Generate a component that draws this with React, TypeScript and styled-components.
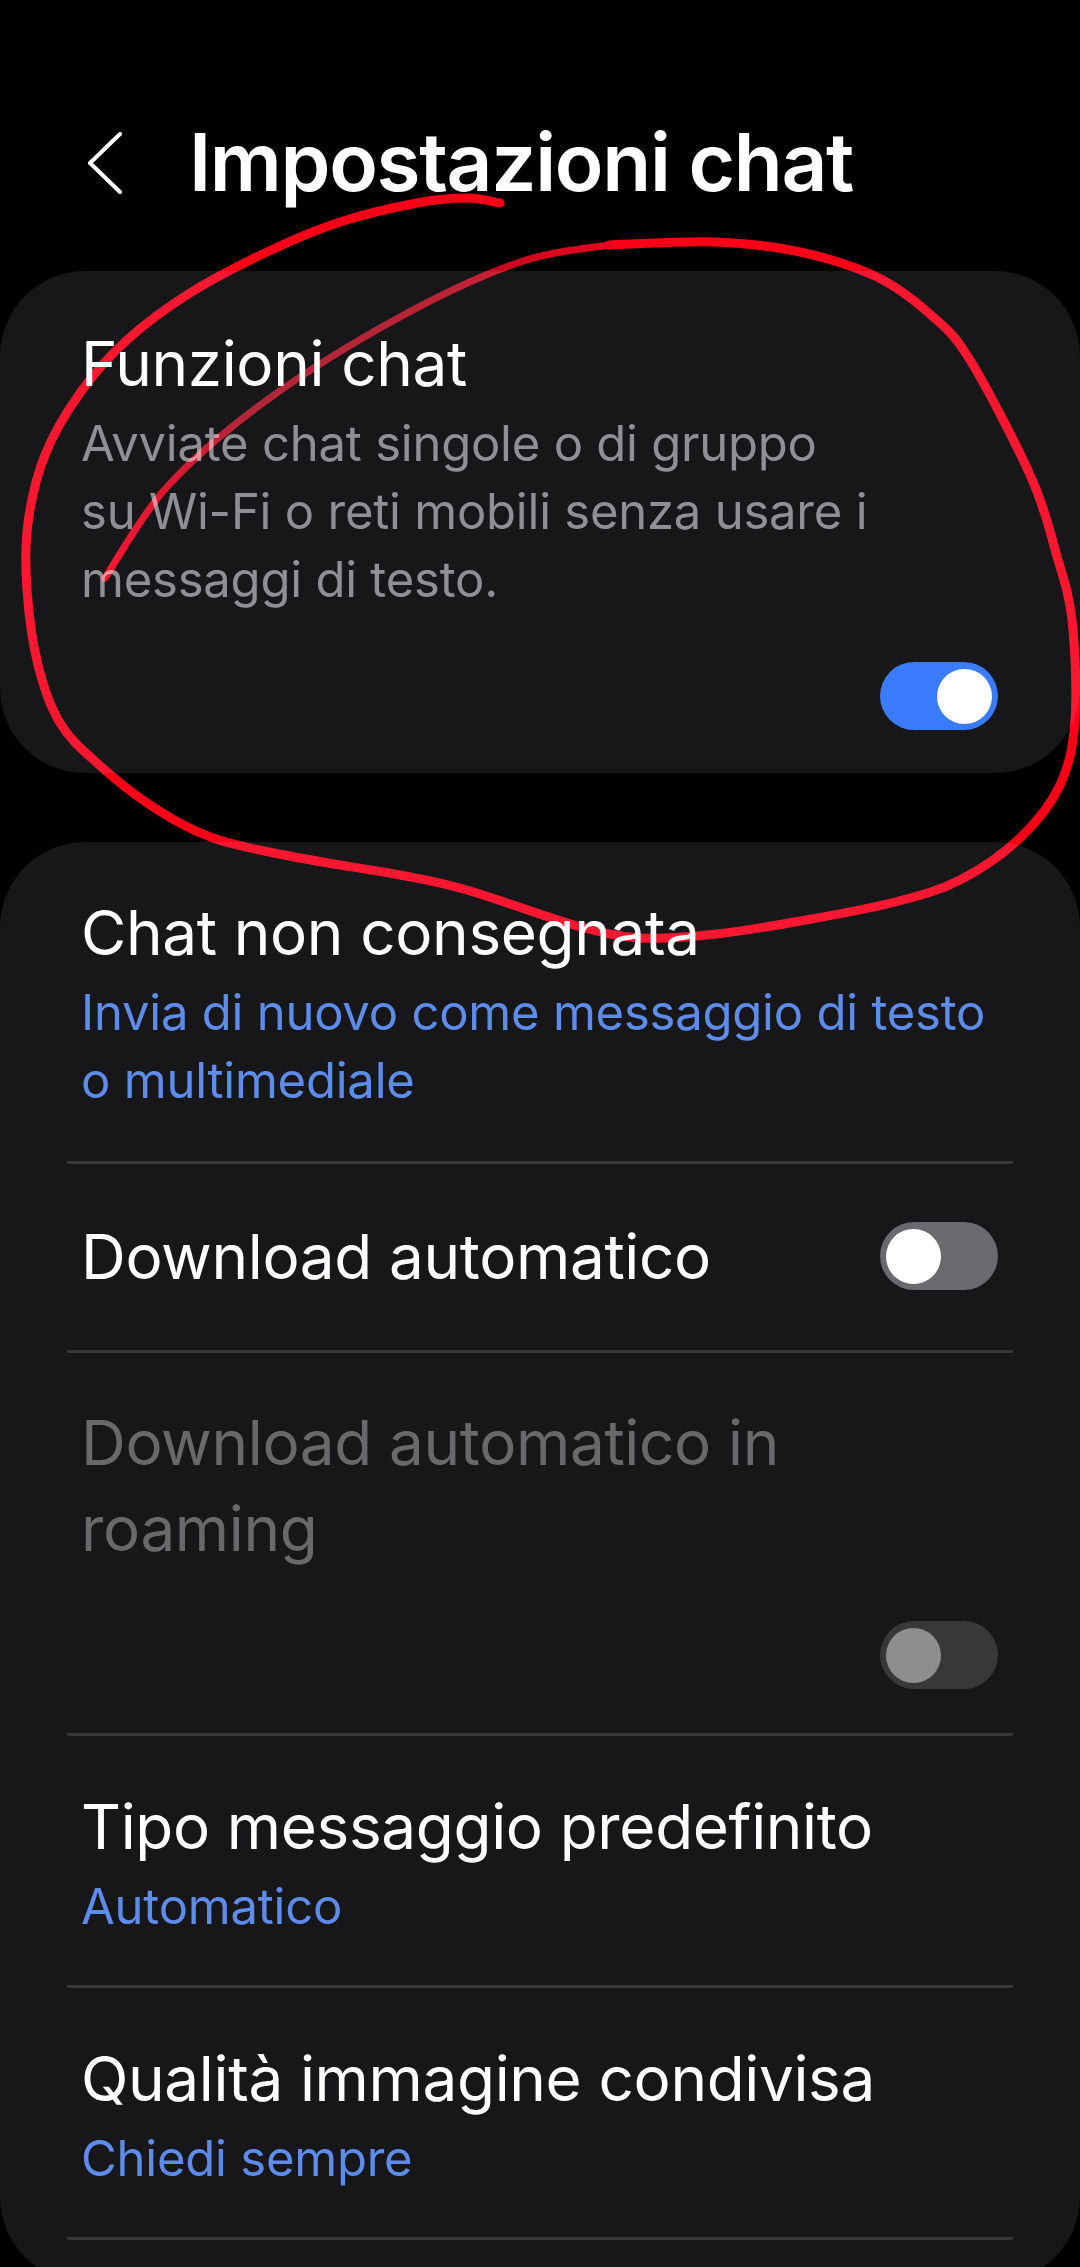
import React from "react";
import styled, { createGlobalStyle } from "styled-components";

const Global = createGlobalStyle`
  html, body { margin: 0; padding: 0; background: #000; }
  #root { width: 1080px; height: 2267px; }
`;

const Page = styled.div`
  position: relative;
  width: 1080px;
  height: 2267px;
  overflow: hidden;
  background: #000;
  font-family: "Inter", "Roboto", "Liberation Sans", sans-serif;
  color: #fff;
  display: flex;
  flex-direction: column;
`;

const Header = styled.header`
  height: 271px;
  flex: none;
  box-sizing: border-box;
  padding: 117px 0 0 87px;
  display: flex;
  align-items: flex-start;
`;

const BackIcon = styled.svg`
  width: 36px;
  height: 62px;
  flex: none;
  margin-top: 15px;
`;

const Title = styled.h1`
  margin: 0 0 0 66px;
  font-size: 80px;
  line-height: 90px;
  font-weight: 600;
  letter-spacing: -1.3px;
  white-space: nowrap;
`;

const Card = styled.section<{ $height: number; $gap?: number }>`
  flex: none;
  box-sizing: border-box;
  height: ${(p) => p.$height}px;
  margin-bottom: ${(p) => p.$gap ?? 0}px;
  padding: 0 67px;
  background: #17171a;
  border-radius: 85px;
`;

const Row = styled.div<{ $height: number; $line?: boolean; $top: number }>`
  box-sizing: border-box;
  height: ${(p) => p.$height}px;
  padding: ${(p) => p.$top}px 15px 0 14px;
  border-bottom: ${(p) => (p.$line ? "3px solid #37373a" : "none")};
`;

const InlineRow = styled(Row)`
  display: flex;
  justify-content: space-between;
  align-items: flex-start;
`;

const Name = styled.div<{ $muted?: boolean }>`
  font-size: 62px;
  line-height: 86px;
  font-weight: 400;
  letter-spacing: -0.35px;
  color: ${(p) => (p.$muted ? "#69696c" : "#fff")};
`;

const Detail = styled.div<{ $link?: boolean }>`
  margin-top: 3px;
  font-size: 49px;
  line-height: 68px;
  letter-spacing: -0.23px;
  color: ${(p) => (p.$link ? "#5d8ceb" : "#8f8f94")};
`;

const SwitchLine = styled.div<{ $top: number }>`
  display: flex;
  justify-content: flex-end;
  margin-top: ${(p) => p.$top}px;
`;

const Track = styled.div<{ $state: "on" | "off" | "disabled"; $shift?: number }>`
  width: 118px;
  height: 68px;
  flex: none;
  box-sizing: border-box;
  border-radius: 34px;
  padding: 6px;
  margin-top: ${(p) => p.$shift ?? 0}px;
  display: flex;
  justify-content: ${(p) => (p.$state === "on" ? "flex-end" : "flex-start")};
  background: ${(p) =>
    p.$state === "on" ? "#3a7bfb" : p.$state === "off" ? "#69696e" : "#38383b"};
`;

const Knob = styled.div<{ $dim?: boolean }>`
  width: 55px;
  height: 55px;
  margin: 0.5px 0;
  border-radius: 50%;
  background: ${(p) => (p.$dim ? "#8e8e90" : "#fff")};
`;

const Ink = styled.svg`
  position: absolute;
  left: 0;
  top: 0;
  width: 1080px;
  height: 2267px;
  pointer-events: none;
  mix-blend-mode: screen;
`;

type Pt = [number, number];

const loop: Pt[] = [
  [500, 203], [467, 198], [417, 203], [340, 222], [267, 252], [190, 293], [127, 340],
  [80, 393], [45, 455], [28, 523], [27, 590], [38, 665], [60, 723], [97, 763],
  [150, 805], [213, 838], [300, 858], [400, 875], [467, 890], [574, 925], [640, 938],
  [716, 934], [806, 920], [895, 902], [960, 880], [1020, 838], [1060, 785], [1075, 720],
  [1072, 620], [1056, 553], [1031, 477], [970, 360], [931, 315], [877, 277], [800, 252],
  [716, 242], [609, 245],
];

const tail: Pt[] = [
  [609, 245], [520, 262], [400, 317], [267, 400], [167, 487], [105, 578],
];

const smooth = (pts: Pt[]) => {
  let d = `M${pts[0][0]} ${pts[0][1]}`;
  for (let i = 0; i < pts.length - 1; i++) {
    const a = pts[Math.max(i - 1, 0)];
    const b = pts[i];
    const c = pts[i + 1];
    const e = pts[Math.min(i + 2, pts.length - 1)];
    const c1x = b[0] + (c[0] - a[0]) / 6;
    const c1y = b[1] + (c[1] - a[1]) / 6;
    const c2x = c[0] - (e[0] - b[0]) / 6;
    const c2y = c[1] - (e[1] - b[1]) / 6;
    d += ` C${c1x} ${c1y} ${c2x} ${c2y} ${c[0]} ${c[1]}`;
  }
  return d;
};

export default function App() {
  return (
    <Page>
      <Global />
      <Header>
        <BackIcon viewBox="0 0 36 62" fill="none">
          <path d="M33 2 L3 31 L33 60" stroke="#fff" strokeWidth="4" strokeLinecap="round" strokeLinejoin="round" />
        </BackIcon>
        <Title>Impostazioni chat</Title>
      </Header>

      <Card $height={502} $gap={69}>
        <Row $height={502} $top={50}>
          <Name>Funzioni chat</Name>
          <Detail>
            Avviate chat singole o di gruppo
            <br />
            su Wi-Fi o reti mobili senza usare i
            <br />
            messaggi di testo.
          </Detail>
          <SwitchLine $top={48}>
            <Track $state="on">
              <Knob />
            </Track>
          </SwitchLine>
        </Row>
      </Card>

      <Card $height={1440}>
        <Row $height={322} $line $top={48}>
          <Name>Chat non consegnata</Name>
          <Detail $link>
            Invia di nuovo come messaggio di testo
            <br />o multimediale
          </Detail>
        </Row>
        <InlineRow $height={189} $line $top={50}>
          <Name>Download automatico</Name>
          <Track $state="off" $shift={8}>
            <Knob />
          </Track>
        </InlineRow>
        <Row $height={383} $line $top={47}>
          <Name $muted>
            Download automatico in
            <br />
            roaming
          </Name>
          <SwitchLine $top={49}>
            <Track $state="disabled">
              <Knob $dim />
            </Track>
          </SwitchLine>
        </Row>
        <Row $height={252} $line $top={48}>
          <Name>Tipo messaggio predefinito</Name>
          <Detail $link>Automatico</Detail>
        </Row>
        <Row $height={252} $line $top={48}>
          <Name>Qualità immagine condivisa</Name>
          <Detail $link>Chiedi sempre</Detail>
        </Row>
      </Card>

      <Ink viewBox="0 0 1080 2267" fill="none">
        <defs>
          <linearGradient id="fade" gradientUnits="userSpaceOnUse" x1="609" y1="245" x2="105" y2="578">
            <stop offset="0" stopColor="#e8001c" />
            <stop offset="0.3" stopColor="#b00f20" />
            <stop offset="0.65" stopColor="#a81222" />
            <stop offset="0.85" stopColor="#dc0018" />
            <stop offset="1" stopColor="#fa0018" />
          </linearGradient>
        </defs>
        <path d={smooth(loop)} stroke="#fc0018" strokeWidth="9" strokeLinecap="round" strokeLinejoin="round" />
        <path d={smooth(tail)} stroke="url(#fade)" strokeWidth="7" strokeLinecap="round" strokeLinejoin="round" />
      </Ink>
    </Page>
  );
}
